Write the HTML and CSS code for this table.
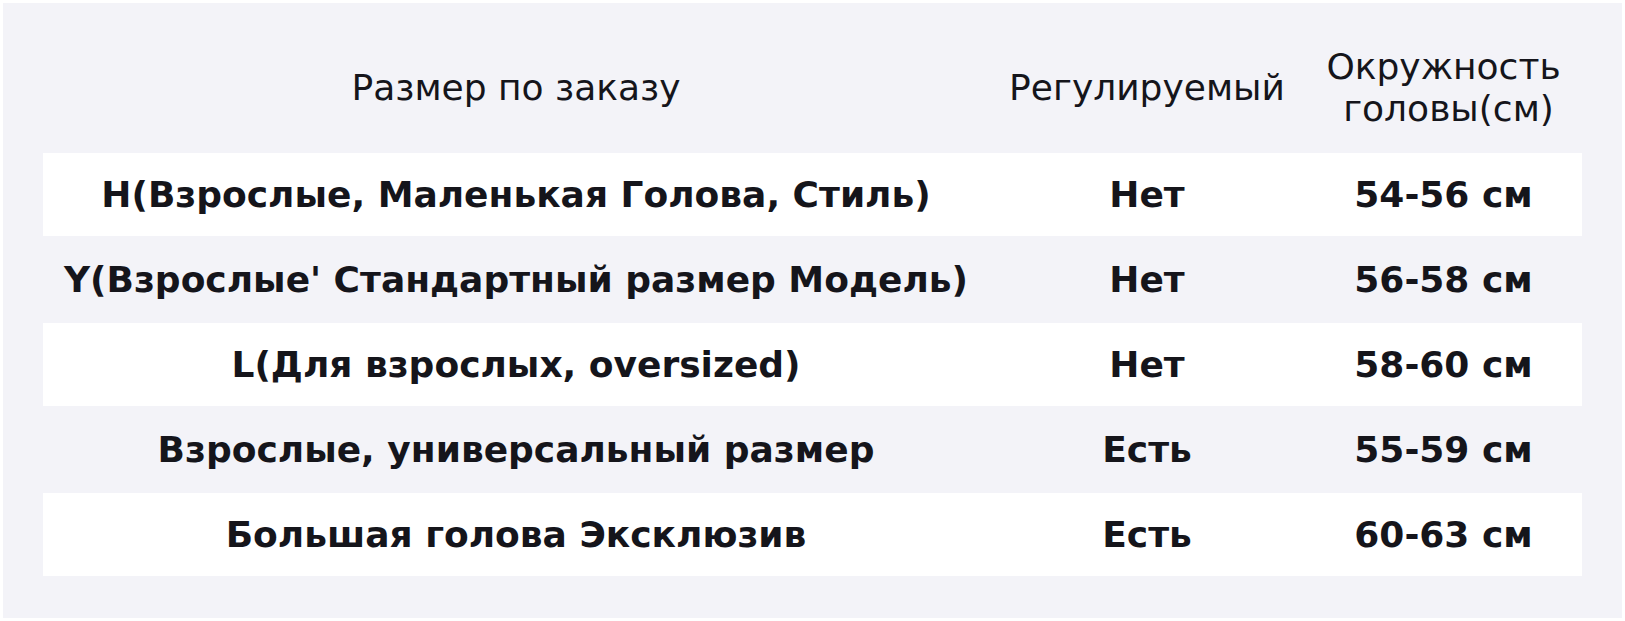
FILE: index.html
```html
<!DOCTYPE html>
<html lang="ru">
<head>
<meta charset="utf-8">
<title>Размеры</title>
<link rel="stylesheet" href="styles.css">
</head>
<body>
<div class="sheet">
  <div class="head">
    <div class="cell">Размер по заказу</div>
    <div class="cell">Регулируемый</div>
    <div class="cell">Окружность<br><span class="indent">головы(см)</span></div>
  </div>
  <div class="rows">
    <div class="row odd">
      <div class="cell">H(Взрослые, Маленькая Голова, Стиль)</div>
      <div class="cell">Нет</div>
      <div class="cell">54-56 см</div>
    </div>
    <div class="row">
      <div class="cell">Y(Взрослые' Стандартный размер Модель)</div>
      <div class="cell">Нет</div>
      <div class="cell">56-58 см</div>
    </div>
    <div class="row odd">
      <div class="cell">L(Для взрослых, oversized)</div>
      <div class="cell">Нет</div>
      <div class="cell">58-60 см</div>
    </div>
    <div class="row">
      <div class="cell">Взрослые, универсальный размер</div>
      <div class="cell">Есть</div>
      <div class="cell">55-59 см</div>
    </div>
    <div class="row odd">
      <div class="cell">Большая голова Эксклюзив</div>
      <div class="cell">Есть</div>
      <div class="cell">60-63 см</div>
    </div>
  </div>
</div>
</body>
</html>
```
FILE: styles.css
```css
html, body {
  background: #ffffff;
}
body {
  margin: 3px;
  font-family: "DejaVu Sans", sans-serif;
  color: #15151b;
}
.sheet {
  background: #f3f3f8;
  padding: 40px 40px 42px 40px;
  height: 615px;
  box-sizing: border-box;
}
.head, .row {
  display: grid;
  grid-template-columns: 946px 316px 277px;
}
.head {
  height: 110px;
  padding-bottom: 20px;
  box-sizing: border-box;
  align-items: center;
  font-size: 36px;
  font-weight: normal;
  line-height: 42px;
}
.indent {
  padding-left: 10px;
}
.cell {
  text-align: center;
}
.rows {
  display: flex;
  flex-direction: column;
  gap: 2px;
}
.row {
  height: 83px;
  align-items: center;
  font-size: 36px;
  font-weight: bold;
}
.row.odd {
  background: #ffffff;
}
```
